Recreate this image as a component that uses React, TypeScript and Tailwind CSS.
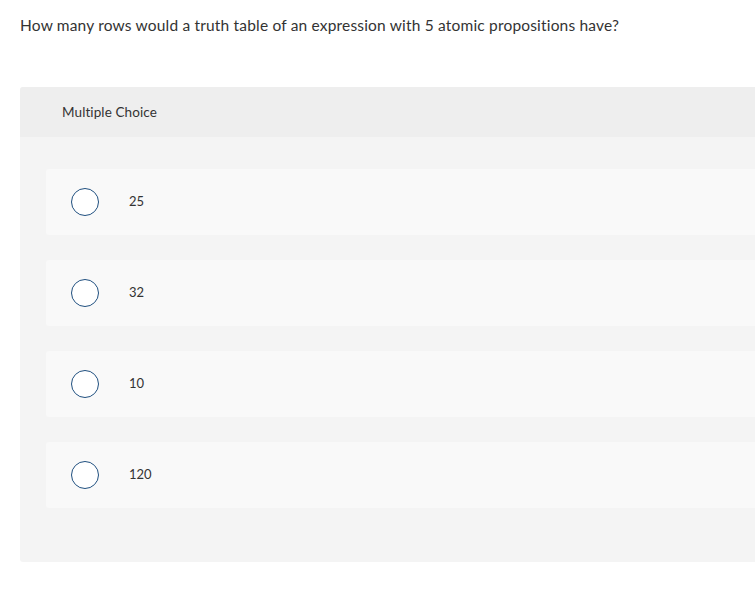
import React from "react";

const options = ["25", "32", "10", "120"];

export default function App() {
  return (
    <div
      className="w-[755px] h-[616px] bg-white overflow-hidden text-[#333333]"
      style={{ fontFamily: 'Lato, "Liberation Sans", sans-serif' }}
    >
      <div className="pl-[20px] pt-[14px] h-[87px]">
        <p className="text-[15.5px] leading-[22px] tracking-[0.18px]">
          How many rows would a truth table of an expression with 5 atomic propositions have?
        </p>
      </div>
      <div className="ml-[20px] w-[760px] rounded-[3px] overflow-hidden bg-[#f4f4f4]">
        <div className="h-[50px] bg-[#eeeeee] flex items-center pl-[42px]">
          <span className="text-[13.5px] tracking-[0.1px]">Multiple Choice</span>
        </div>
        <div className="pt-[32px] pb-[54px] pl-[26px] flex flex-col gap-[25px]">
          {options.map((o) => (
            <div
              key={o}
              className="h-[66px] bg-[#f9f9f9] rounded-[3px] flex items-center pl-[25px]"
            >
              <div className="w-[28px] h-[28px] rounded-full border-[1.5px] border-[#1f4f7f] bg-white" />
              <span className="ml-[30px] text-[13px]">{o}</span>
            </div>
          ))}
        </div>
      </div>
    </div>
  );
}
